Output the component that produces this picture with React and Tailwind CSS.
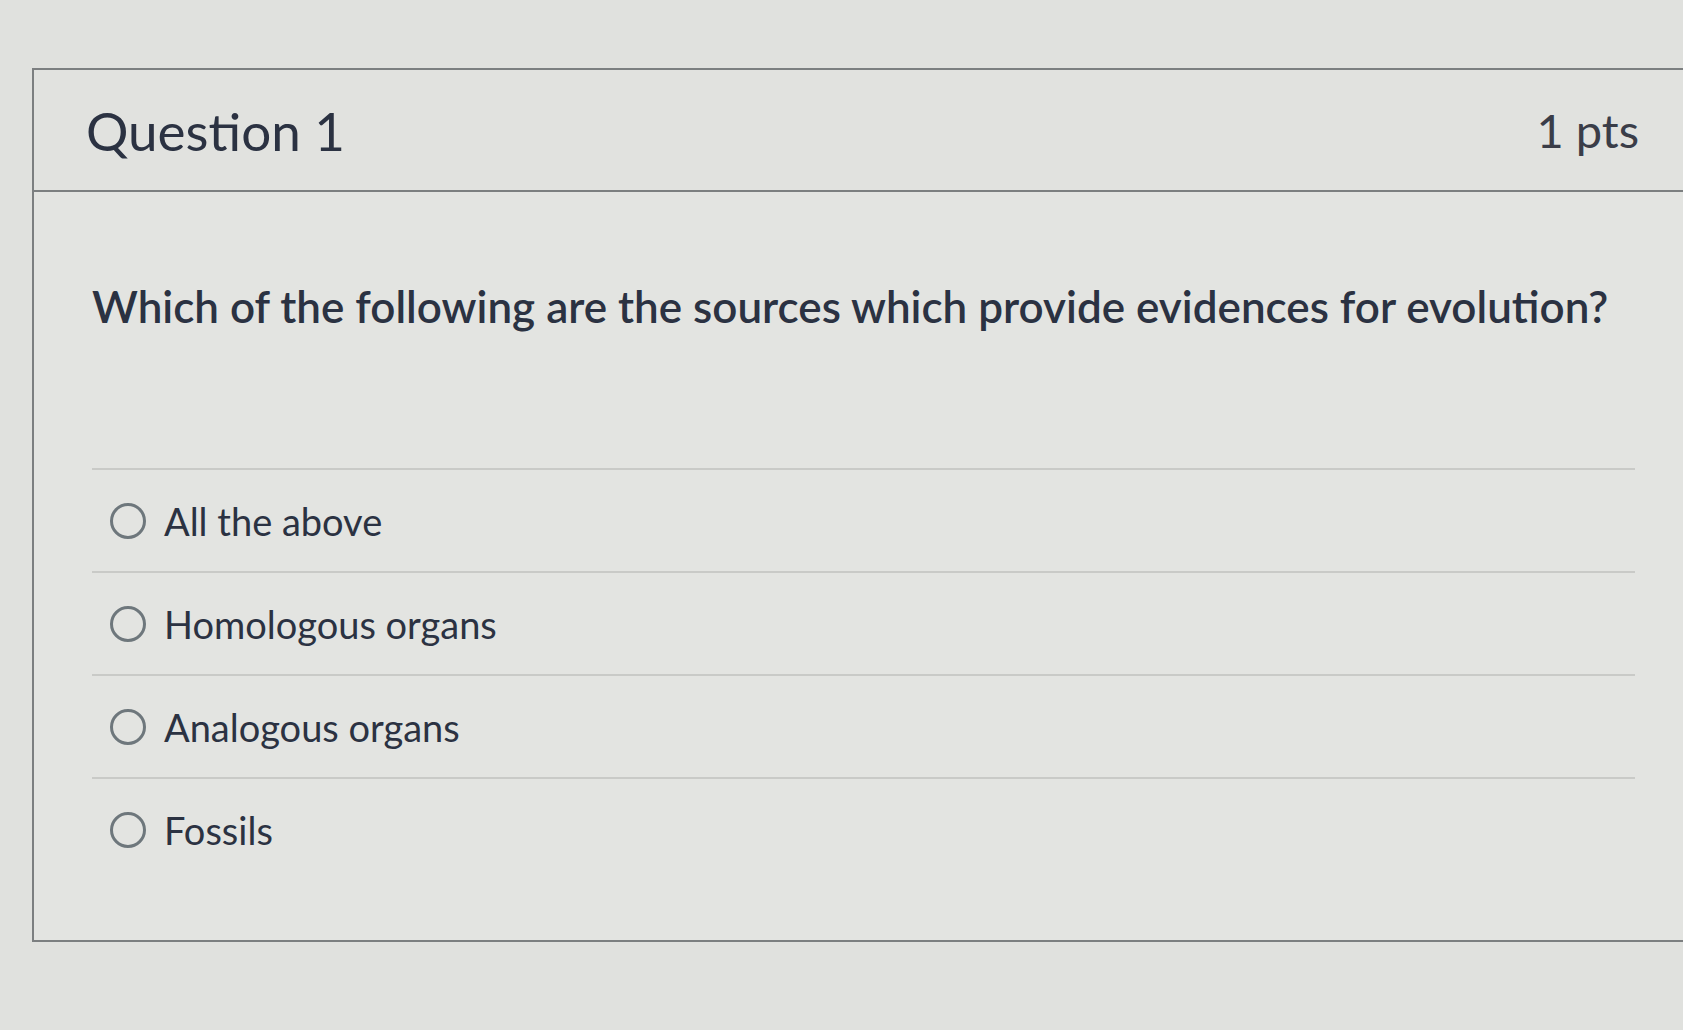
import React from 'react';

const options = ['All the above', 'Homologous organs', 'Analogous organs', 'Fossils'];

const App = () => {
  return (
    <div className="min-h-[1030px] w-full overflow-hidden bg-[#e0e1de] pt-[68px] pl-[32px] font-['Lato',_'Liberation_Sans',_sans-serif] text-[#2b3242]">
      {/* Question card */}
      <div className="border-2 border-r-0 border-[#7c7f80] bg-[#e3e4e1]">
        <div className="flex h-[122px] items-center justify-between border-b-2 border-[#7c7f80] bg-[#e1e2df] pl-[52px] pr-[44px]">
          <h2 className="text-[53px] leading-none">Question 1</h2>
          <span className="text-[47px] leading-none text-[#3a3d48]">1 pts</span>
        </div>
        <div className="pl-[58px] pr-[48px] pt-[89px] pb-[60px]">
          <p className="text-[44px] font-semibold leading-[50px]">
            Which of the following are the sources which provide evidences for evolution?
          </p>
          <div className="mt-[137px]">
            {options.map((opt) => (
              <label key={opt} className="flex h-[103px] items-center gap-[18px] border-t-2 border-[#c9cac7] pl-[18px]">
                <span className="h-[36px] w-[36px] shrink-0 rounded-full border-[3px] border-[#6e777c]" />
                <span className="text-[38px] leading-none">{opt}</span>
              </label>
            ))}
          </div>
        </div>
      </div>
    </div>
  );
};

export default App;
